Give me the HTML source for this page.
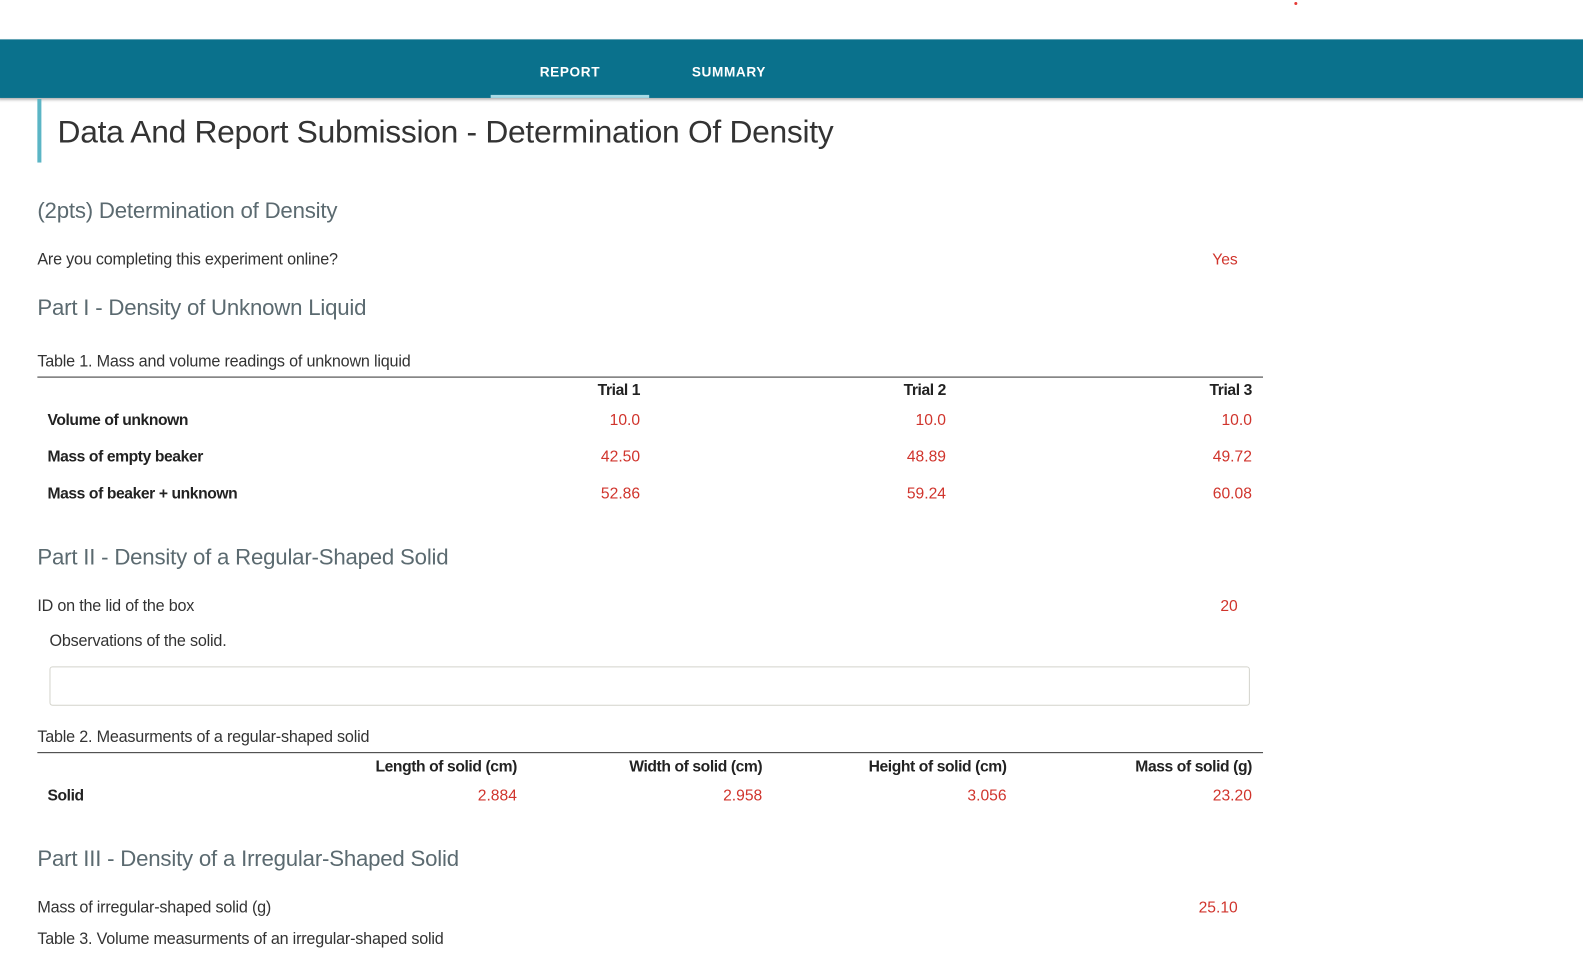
<!DOCTYPE html>
<html><head><meta charset="utf-8"><style>
*{margin:0;padding:0;box-sizing:border-box}
body{width:1583px;height:954px;background:#fff;font-family:"Liberation Sans",sans-serif;position:relative;overflow:hidden;color:#333}
#w{position:absolute;left:0;top:0;width:1568px;height:945px;transform:scale(1.0096);transform-origin:0 0}
.a{position:absolute;white-space:nowrap;line-height:18px}
.t{font-size:16px;color:#333;letter-spacing:-0.2px}
.b{font-size:15.5px;font-weight:bold;color:#222;letter-spacing:-0.4px}
.r{font-size:15.5px;color:#d0342c;text-align:right}
.h{font-size:22px;color:#5b6a70;line-height:26px;letter-spacing:-0.2px}
.line{position:absolute;height:1px;background:#333;left:37px;width:1214px}
</style></head><body><div id="w">
<div style="position:absolute;left:1282px;top:2px;width:3px;height:3px;background:#e53935;border-radius:50%"></div>
<div style="position:absolute;left:-2px;top:39px;width:1600px;height:58px;background:#0a718c;box-shadow:0 2px 3px rgba(0,0,0,.35)"></div>
<div class="a" style="left:486px;top:63px;width:157px;text-align:center;color:#fff;font-weight:bold;font-size:13.5px;letter-spacing:0.6px">REPORT</div>
<div class="a" style="left:643px;top:63px;width:158px;text-align:center;color:#fff;font-weight:bold;font-size:13.5px;letter-spacing:0.6px">SUMMARY</div>
<div style="position:absolute;left:486px;top:94px;width:157px;height:3px;background:#a8dbe6"></div>
<div style="position:absolute;left:37px;top:98px;width:4px;height:63px;background:#5bb5c5"></div>
<div class="a" style="left:57px;top:111px;font-size:31.5px;line-height:38px;color:#333;letter-spacing:-0.3px">Data And Report Submission - Determination Of Density</div>
<div class="a h" style="left:37px;top:196px">(2pts) Determination of Density</div>
<div class="a t" style="left:37px;top:249px">Are you completing this experiment online?</div>
<div class="a r" style="left:1126px;top:249px;width:100px">Yes</div>
<div class="a h" style="left:37px;top:292px">Part I - Density of Unknown Liquid</div>
<div class="a t" style="left:37px;top:350px">Table 1. Mass and volume readings of unknown liquid</div>
<div class="line" style="top:373px"></div>
<div class="a b" style="left:534px;top:378px;width:100px;text-align:right">Trial 1</div>
<div class="a b" style="left:837px;top:378px;width:100px;text-align:right">Trial 2</div>
<div class="a b" style="left:1140px;top:378px;width:100px;text-align:right">Trial 3</div>
<div class="a b" style="left:47px;top:408px">Volume of unknown</div>
<div class="a r" style="left:534px;top:408px;width:100px">10.0</div>
<div class="a r" style="left:837px;top:408px;width:100px">10.0</div>
<div class="a r" style="left:1140px;top:408px;width:100px">10.0</div>
<div class="a b" style="left:47px;top:444px">Mass of empty beaker</div>
<div class="a r" style="left:534px;top:444px;width:100px">42.50</div>
<div class="a r" style="left:837px;top:444px;width:100px">48.89</div>
<div class="a r" style="left:1140px;top:444px;width:100px">49.72</div>
<div class="a b" style="left:47px;top:481px">Mass of beaker + unknown</div>
<div class="a r" style="left:534px;top:481px;width:100px">52.86</div>
<div class="a r" style="left:837px;top:481px;width:100px">59.24</div>
<div class="a r" style="left:1140px;top:481px;width:100px">60.08</div>
<div class="a h" style="left:37px;top:539px">Part II - Density of a Regular-Shaped Solid</div>
<div class="a t" style="left:37px;top:592px">ID on the lid of the box</div>
<div class="a r" style="left:1126px;top:592px;width:100px">20</div>
<div class="a t" style="left:49px;top:627px">Observations of the solid.</div>
<div style="position:absolute;left:49px;top:660px;width:1189px;height:39px;border:1px solid #d4d4cc;border-radius:3px"></div>
<div class="a t" style="left:37px;top:722px">Table 2. Measurments of a regular-shaped solid</div>
<div class="line" style="top:745px"></div>
<div class="a b" style="left:312px;top:751px;width:200px;text-align:right">Length of solid (cm)</div>
<div class="a b" style="left:555px;top:751px;width:200px;text-align:right">Width of solid (cm)</div>
<div class="a b" style="left:797px;top:751px;width:200px;text-align:right">Height of solid (cm)</div>
<div class="a b" style="left:1040px;top:751px;width:200px;text-align:right">Mass of solid (g)</div>
<div class="a b" style="left:47px;top:780px">Solid</div>
<div class="a r" style="left:412px;top:780px;width:100px">2.884</div>
<div class="a r" style="left:655px;top:780px;width:100px">2.958</div>
<div class="a r" style="left:897px;top:780px;width:100px">3.056</div>
<div class="a r" style="left:1140px;top:780px;width:100px">23.20</div>
<div class="a h" style="left:37px;top:838px">Part III - Density of a Irregular-Shaped Solid</div>
<div class="a t" style="left:37px;top:891px">Mass of irregular-shaped solid (g)</div>
<div class="a r" style="left:1126px;top:891px;width:100px">25.10</div>
<div class="a t" style="left:37px;top:922px">Table 3. Volume measurments of an irregular-shaped solid</div>
</div></body></html>
